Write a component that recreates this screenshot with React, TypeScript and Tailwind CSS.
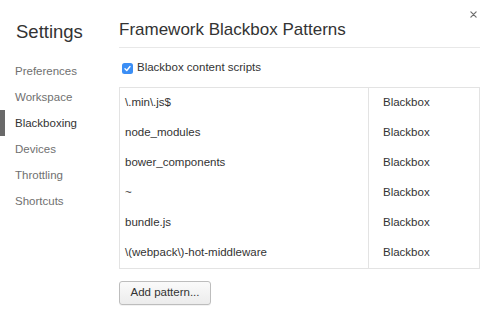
const navItems = ["Preferences", "Workspace", "Blackboxing", "Devices", "Throttling", "Shortcuts"];

const patterns = [
  "\\.min\\.js$",
  "node_modules",
  "bower_components",
  "~",
  "bundle.js",
  "\\(webpack\\)-hot-middleware",
];

export default function App() {
  return (
    <div
      className="relative flex h-[316px] w-[489px] overflow-hidden bg-white text-[#333]"
      style={{ fontFamily: '"Liberation Sans", Arial, sans-serif' }}
    >
      <button
        type="button"
        className="absolute right-[10px] top-[9px] flex h-[11px] w-[11px] items-center justify-center text-[#6e6e6e]"
        aria-label="Close"
      >
        <svg viewBox="0 0 8 8" className="h-[7px] w-[7px]">
          <path d="M1 1L7 7M7 1L1 7" stroke="currentColor" strokeWidth="1.4" strokeLinecap="round" />
        </svg>
      </button>

      {/* sidebar */}
      <aside className="flex w-[119px] shrink-0 flex-col">
        <h1 className="h-[59px] pl-[16px] pt-[20px] text-[18.5px] leading-[24px] text-[#333]">Settings</h1>
        <nav className="flex flex-col">
          {navItems.map((item) => {
            const active = item === "Blackboxing";
            return (
              <div key={item} className="relative flex h-[26px] items-center pl-[15px]">
                {active && <span className="absolute left-0 top-[-1px] h-[26px] w-[5px] bg-[#696969]" />}
                <span className={`text-[11.5px] ${active ? "text-[#333]" : "text-[#707070]"}`}>{item}</span>
              </div>
            );
          })}
        </nav>
      </aside>

      {/* main */}
      <main className="flex w-[361px] flex-col">
        <div className="flex h-[48px] items-center border-b border-[#e8e8e8] pb-[2px] pt-[14px]">
          <h2 className="text-[17px] leading-[22px] text-[#333]">Framework Blackbox Patterns</h2>
        </div>

        <label className="mt-[13px] flex h-[14px] items-center gap-[4px] pl-[3px]">
          <span className="flex h-[11px] w-[11px] items-center justify-center rounded-[2.5px] bg-[#3b8ef5]">
            <svg viewBox="0 0 10 10" className="h-[9px] w-[9px]">
              <path d="M2.2 5.2L4.2 7.2L7.8 2.8" fill="none" stroke="white" strokeWidth="1.5" strokeLinecap="round" strokeLinejoin="round" />
            </svg>
          </span>
          <span className="text-[11.5px] text-[#333]">Blackbox content scripts</span>
        </label>

        <div className="mt-[12px] border border-[#e3e3e3]">
          {patterns.map((p) => (
            <div key={p} className="flex h-[30px] items-center">
              <div className="flex h-full w-[249px] items-center border-r border-[#e3e3e3] pl-[5px] text-[11.5px]">{p}</div>
              <div className="pl-[14px] text-[11.5px]">Blackbox</div>
            </div>
          ))}
        </div>

        <div className="mt-[10px]">
          <button
            type="button"
            className="h-[24px] w-[92px] rounded-[3px] border border-[#bdbdbd] bg-gradient-to-b from-[#fafafa] to-[#ececec] text-[11.5px] text-[#333] shadow-[0_1px_0_rgba(0,0,0,0.05)]"
          >
            Add pattern...
          </button>
        </div>
      </main>
    </div>
  );
}
